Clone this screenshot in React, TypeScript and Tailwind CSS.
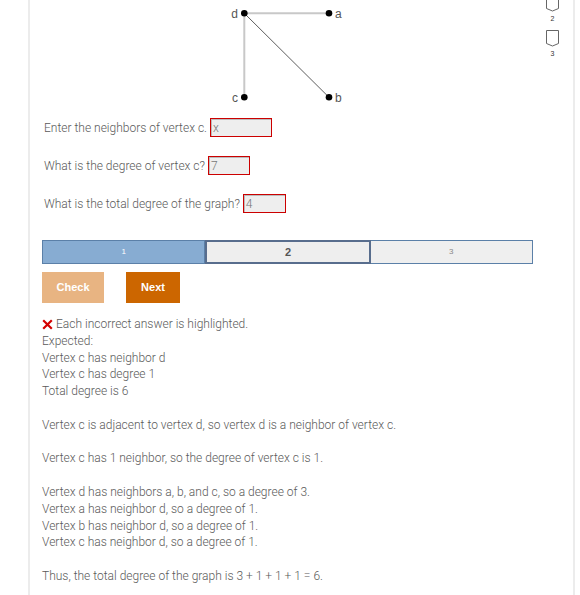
import React from "react";

const font = { fontFamily: "Roboto, 'Liberation Sans', sans-serif" };

function Bookmark({ label }: { label: string }) {
  return (
    <div className="flex flex-col items-center">
      <svg width="15" height="17" viewBox="0 0 15 17" className="block">
        <path d="M1.5 0.5 V13.5 L7.5 16 L13.5 13.5 V0.5 Z" fill="none" stroke="#666" strokeWidth="1" />
      </svg>
      <div className="text-[7px] leading-[8px] text-[#333] font-['Liberation_Sans',sans-serif] mt-[3px]">{label}</div>
    </div>
  );
}

function Field({ label, value, width }: { label: string; value: string; width: string }) {
  return (
    <div className="flex items-center h-[19px]">
      <span className="text-[12px] text-[#5a5a5a] font-light">{label}</span>
      <div
        className={`ml-[3px] h-[19px] ${width} border border-[#c00] bg-[#eeeeee] shadow-[inset_1px_1px_0_#bbb] flex items-center pl-[2px] text-[12px] text-[#777] font-light`}
      >
        {value}
      </div>
    </div>
  );
}

export default function App() {
  return (
    <div className="w-[580px] h-[595px] bg-white overflow-hidden" style={font}>
      <div className="ml-[28px] w-[547px] h-[595px] border-x-2 border-[#ececec] flex">
        <div className="pl-[12px] w-[502px] flex flex-col">
          <svg width="490" height="118" viewBox="0 0 490 118" className="block">
            <line x1="202.3" y1="13.3" x2="287" y2="13.3" stroke="#c8c8c8" strokeWidth="2" />
            <line x1="202.3" y1="13.3" x2="202.3" y2="97.3" stroke="#c8c8c8" strokeWidth="2" />
            <line x1="202.3" y1="13.3" x2="287" y2="97.3" stroke="#333" strokeWidth="0.8" />
            <circle cx="202.3" cy="13.3" r="3.3" fill="#000" />
            <circle cx="287" cy="13.3" r="3.3" fill="#000" />
            <circle cx="202.3" cy="97.3" r="3.3" fill="#000" />
            <circle cx="287" cy="97.3" r="3.3" fill="#000" />
            <text x="196" y="17.5" textAnchor="end" fontSize="12" fill="#555" fontFamily="Liberation Sans, sans-serif">d</text>
            <text x="293" y="17.5" fontSize="12" fill="#555" fontFamily="Liberation Sans, sans-serif">a</text>
            <text x="196" y="101.5" textAnchor="end" fontSize="12" fill="#555" fontFamily="Liberation Sans, sans-serif">c</text>
            <text x="293" y="101.5" fontSize="12" fill="#555" fontFamily="Liberation Sans, sans-serif">b</text>
          </svg>

          <div className="flex flex-col gap-[19px] pl-[2px]">
            <Field label="Enter the neighbors of vertex c." value="x" width="w-[62px]" />
            <Field label="What is the degree of vertex c?" value="7" width="w-[42px]" />
            <Field label="What is the total degree of the graph?" value="4" width="w-[43px]" />
          </div>

          <div className="mt-[27px] flex h-[24px] w-[491px] font-['Liberation_Sans',sans-serif]">
            <div className="flex-1 bg-[#87acd2] border border-[#5b80a8] flex items-center justify-center text-[8px] text-white">1</div>
            <div className="flex-1 bg-[#eeeeee] border-2 border-[#586d8d] flex items-center justify-center text-[11px] font-bold text-[#555]">2</div>
            <div className="flex-1 bg-[#efefef] border border-[#5b80a8] border-l-0 flex items-center justify-center text-[8px] text-[#888]">3</div>
          </div>

          <div className="mt-[8px] flex gap-[22px] font-['Liberation_Sans',sans-serif]">
            <div className="w-[62px] h-[31px] bg-[#e8b482] flex items-center justify-center text-white text-[11px] font-bold">Check</div>
            <div className="w-[54px] h-[31px] bg-[#cc6600] flex items-center justify-center text-white text-[11px] font-bold">Next</div>
          </div>

          <div className="mt-[13px] text-[12px] leading-[16.8px] text-[#5a5a5a] font-light">
            <div className="flex items-center">
              <svg width="11" height="11" viewBox="0 0 11 11" className="mr-[3px]">
                <path d="M1.2 1.2 L9.8 9.8 M9.8 1.2 L1.2 9.8" stroke="#d40000" strokeWidth="2.2" />
              </svg>
              <span>Each incorrect answer is highlighted.</span>
            </div>
            <div>Expected:</div>
            <div>Vertex c has neighbor d</div>
            <div>Vertex c has degree 1</div>
            <div>Total degree is 6</div>
            <div className="mt-[16.8px]">Vertex c is adjacent to vertex d, so vertex d is a neighbor of vertex c.</div>
            <div className="mt-[16.8px]">Vertex c has 1 neighbor, so the degree of vertex c is 1.</div>
            <div className="mt-[16.8px]">Vertex d has neighbors a, b, and c, so a degree of 3.</div>
            <div>Vertex a has neighbor d, so a degree of 1.</div>
            <div>Vertex b has neighbor d, so a degree of 1.</div>
            <div>Vertex c has neighbor d, so a degree of 1.</div>
            <div className="mt-[16.8px]">Thus, the total degree of the graph is 3 + 1 + 1 + 1 = 6.</div>
          </div>
        </div>

        <div className="flex-1 flex flex-col items-center mt-[-5px] gap-[7px]">
          <Bookmark label="2" />
          <Bookmark label="3" />
        </div>
      </div>
    </div>
  );
}
